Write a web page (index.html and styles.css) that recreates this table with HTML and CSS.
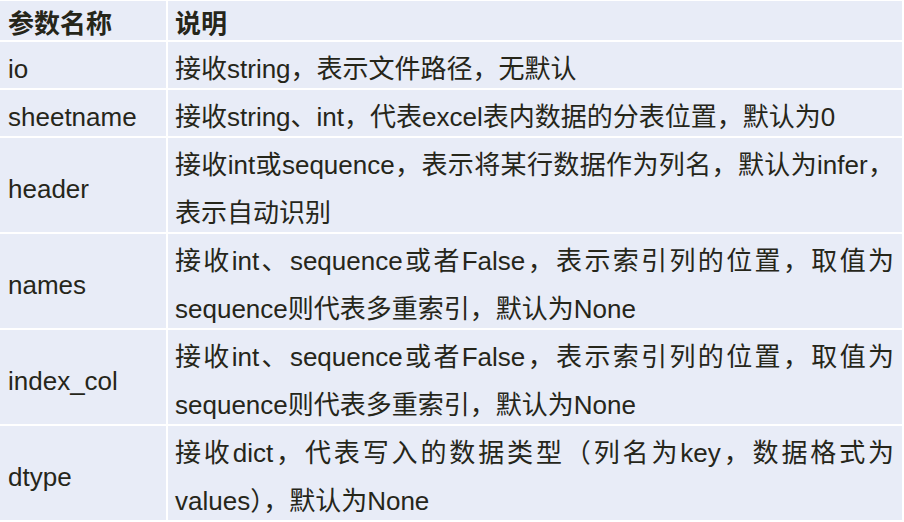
FILE: index.html
```html
<!DOCTYPE html>
<html lang="zh-CN">
<head>
<meta charset="utf-8">
<link rel="stylesheet" href="styles.css">
</head>
<body>
<div class="table">
  <div class="cell head c1">参数名称</div>
  <div class="cell head c2">说明</div>

  <div class="cell c1">io</div>
  <div class="cell c2"><div class="line">接收string，表示文件路径，无默认</div></div>

  <div class="cell c1">sheetname</div>
  <div class="cell c2"><div class="line">接收string、int，代表excel表内数据的分表位置，默认为0</div></div>

  <div class="cell c1">header</div>
  <div class="cell c2"><div class="line full">接收int或sequence，表示将某行数据作为列名，默认为infer，</div><div class="line">表示自动识别</div></div>

  <div class="cell c1">names</div>
  <div class="cell c2"><div class="line full">接收int、sequence或者False，表示索引列的位置，取值为</div><div class="line">sequence则代表多重索引，默认为None</div></div>

  <div class="cell c1">index_col</div>
  <div class="cell c2"><div class="line full">接收int、sequence或者False，表示索引列的位置，取值为</div><div class="line">sequence则代表多重索引，默认为None</div></div>

  <div class="cell c1">dtype</div>
  <div class="cell c2"><div class="line full">接收dict，代表写入的数据类型（列名为key，数据格式为</div><div class="line">values），默认为None</div></div>
</div>
</body>
</html>
```
FILE: styles.css
```css
html, body {
  margin: 0;
  padding: 0;
  background: #ffffff;
}
body {
  width: 904px;
  height: 522px;
  overflow: hidden;
  font-family: "Liberation Sans", "Noto Sans CJK SC", sans-serif;
  font-size: 26px;
  color: #26261a;
}
.table {
  display: grid;
  grid-template-columns: 166px 1fr;
  grid-template-rows: 39px 46px 46px 94px 94px 94px 94px;
  gap: 2px;
  padding: 1px 2px 2px 0;
  background: #ffffff;
  box-sizing: border-box;
  width: 904px;
  height: 522px;
}
.cell {
  background: #e8ecf7;
  display: flex;
  flex-direction: column;
  justify-content: center;
  line-height: 48px;
  white-space: nowrap;
  padding-top: 7px;
  box-sizing: border-box;
  overflow: hidden;
}
.c1 {
  padding-left: 8px;
}
.c2 {
  padding-left: 7px;
  padding-right: 8px;
}
.head {
  font-weight: bold;
  line-height: 32px;
}
.line {
  display: block;
}
.line.full {
  text-align: justify;
  text-align-last: justify;
}
```
